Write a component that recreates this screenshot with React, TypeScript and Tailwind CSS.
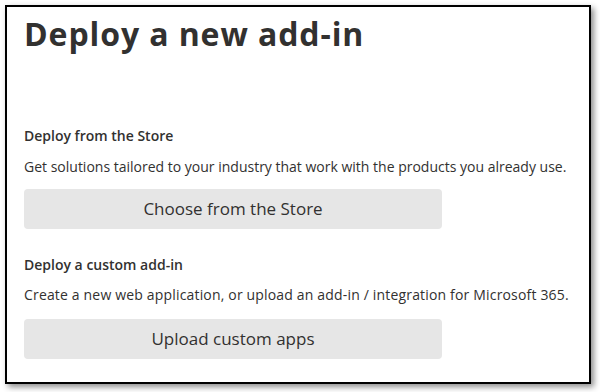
export default function App() {
  return (
    <div className="w-[600px] h-[392px] bg-white pt-[5px] pl-[5px]" style={{ fontFamily: '"Open Sans", "Noto Sans", sans-serif' }}>
      <div className="w-[586px] h-[379px] border-2 border-black bg-white shadow-[3px_3px_6px_rgba(0,0,0,0.45)] pl-[17px] pr-4 text-[#323130]">
        <h1 className="text-[32px] font-bold leading-[40px] tracking-[0.9px] mt-[7px]">Deploy a new add-in</h1>

        <section className="mt-[72px]">
          <h2 className="text-[14px] font-semibold leading-5">Deploy from the Store</h2>
          <p className="text-[14px] leading-5 mt-[11px]">
            Get solutions tailored to your industry that work with the products you already use.
          </p>
          <button className="mt-[12px] w-[418px] h-10 rounded-sm bg-[#e6e6e6] text-[17px] text-[#323130]">
            Choose from the Store
          </button>
        </section>

        <section className="mt-[26px]">
          <h2 className="text-[14px] font-semibold leading-5">Deploy a custom add-in</h2>
          <p className="text-[14px] leading-5 mt-[10px] tracking-[0.17px]">
            Create a new web application, or upload an add-in / integration for Microsoft 365.
          </p>
          <button className="mt-[14px] w-[418px] h-10 rounded-sm bg-[#e6e6e6] text-[17px] text-[#323130]">
            Upload custom apps
          </button>
        </section>
      </div>
    </div>
  );
}
